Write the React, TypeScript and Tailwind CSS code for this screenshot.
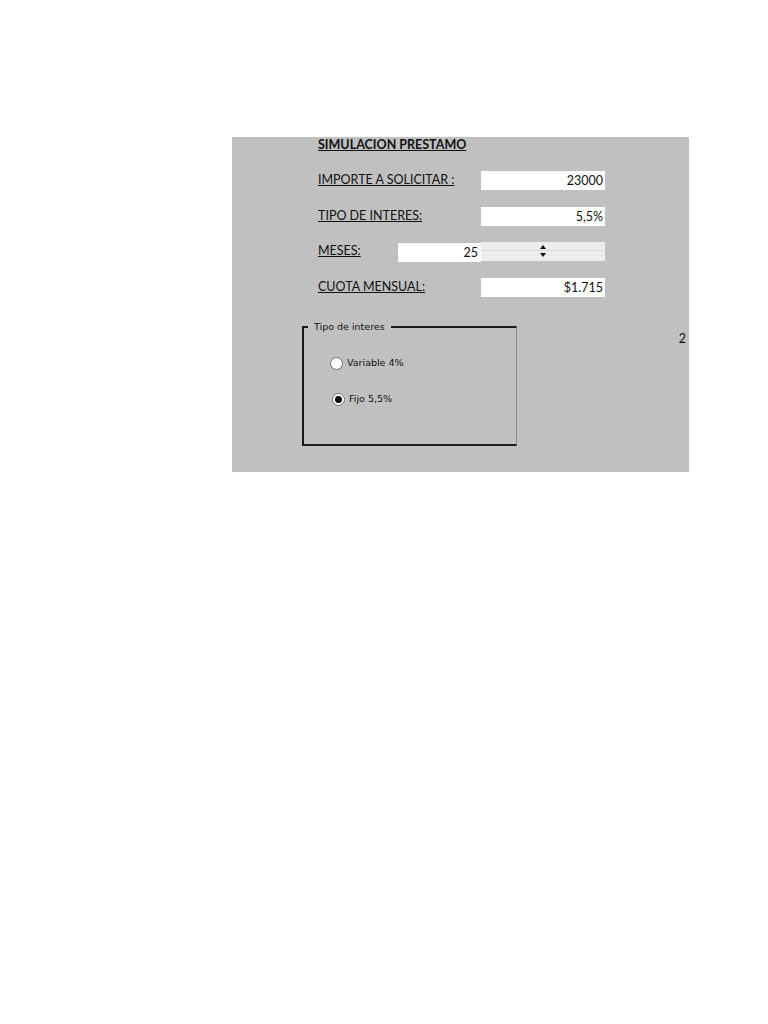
import React from 'react';

const cell = "font-['Lato','Liberation_Sans',sans-serif] text-[12.5px] text-[#111]";

function Radio({ label, checked }: { label: string; checked?: boolean }) {
    return (
        <div className="flex items-center gap-[4px]">
            <span className="flex h-[13px] w-[13px] items-center justify-center rounded-full border border-[#6f6f6f] bg-white">
                {checked && <span className="h-[7px] w-[7px] rounded-full bg-black" />}
            </span>
            <span className="font-['DejaVu_Sans',sans-serif] text-[9.5px] text-[#111]">{label}</span>
        </div>
    );
}

export default function App() {
    return (
        <div className="min-h-screen bg-white pl-[232px] pt-[137px]">
            <div className="flex h-[335px] w-[457px] flex-col bg-[#c0c0c0]">
                {/* Title */}
                <div className={`${cell} ml-[86px] h-[16px] leading-[16px] font-bold underline`}>SIMULACION PRESTAMO</div>

                {/* Importe */}
                <div className="mt-[18px] flex h-[19px] items-center">
                    <span className={`${cell} ml-[86px] w-[163px] underline`}>IMPORTE A SOLICITAR :</span>
                    <div className={`${cell} h-[19px] w-[124px] bg-white pr-[2px] text-right leading-[19px]`}>23000</div>
                </div>

                {/* Tipo */}
                <div className="mt-[17px] flex h-[19px] items-center">
                    <span className={`${cell} ml-[86px] w-[163px] underline`}>TIPO DE INTERES:</span>
                    <div className={`${cell} h-[19px] w-[124px] bg-white pr-[2px] text-right leading-[19px]`}>5,5%</div>
                </div>

                {/* Meses */}
                <div className="mt-[16px] flex h-[19px] items-center">
                    <span className={`${cell} ml-[86px] w-[80px] underline`}>MESES:</span>
                    <div className={`${cell} mt-[1px] h-[19px] w-[83px] bg-white pr-[3px] text-right leading-[19px]`}>25</div>
                    <div className="flex h-[19px] w-[124px] flex-col bg-[#ededed]">
                        <div className="flex h-[9px] items-end justify-center border-b border-[#d9d9d9] pb-[1px]">
                            <svg width="6" height="4" viewBox="0 0 6 4"><path d="M3 0L6 4H0Z" fill="#111" /></svg>
                        </div>
                        <div className="flex h-[10px] items-start justify-center pt-[2px]">
                            <svg width="6" height="4" viewBox="0 0 6 4"><path d="M0 0H6L3 4Z" fill="#111" /></svg>
                        </div>
                    </div>
                </div>

                {/* Cuota */}
                <div className="mt-[17px] flex h-[19px] items-center">
                    <span className={`${cell} ml-[86px] w-[163px] underline`}>CUOTA MENSUAL:</span>
                    <div className={`${cell} h-[19px] w-[124px] bg-white pr-[2px] text-right leading-[19px]`}>$1.715</div>
                </div>

                {/* Group box + page number */}
                <div className="mt-[25px] flex items-start">
                    <fieldset className="ml-[70px] h-[124px] w-[215px] border-b-2 border-l-2 border-r border-t-2 border-b-[#1a1a1a] border-l-[#1a1a1a] border-r-[#8a8a8a] border-t-[#1a1a1a]">
                        <legend className="ml-[4px] px-[6px] font-['DejaVu_Sans',sans-serif] text-[9.5px] leading-[10px] text-[#111]">Tipo de interes</legend>
                        <div className="flex flex-col pt-[24px]">
                            <div className="ml-[26px]">
                                <Radio label="Variable 4%" />
                            </div>
                            <div className="ml-[28px] mt-[22px]">
                                <Radio label="Fijo 5,5%" checked />
                            </div>
                        </div>
                    </fieldset>
                    <span className={`${cell} ml-auto mr-[3px] mt-[8px]`}>2</span>
                </div>
            </div>
        </div>
    );
}
